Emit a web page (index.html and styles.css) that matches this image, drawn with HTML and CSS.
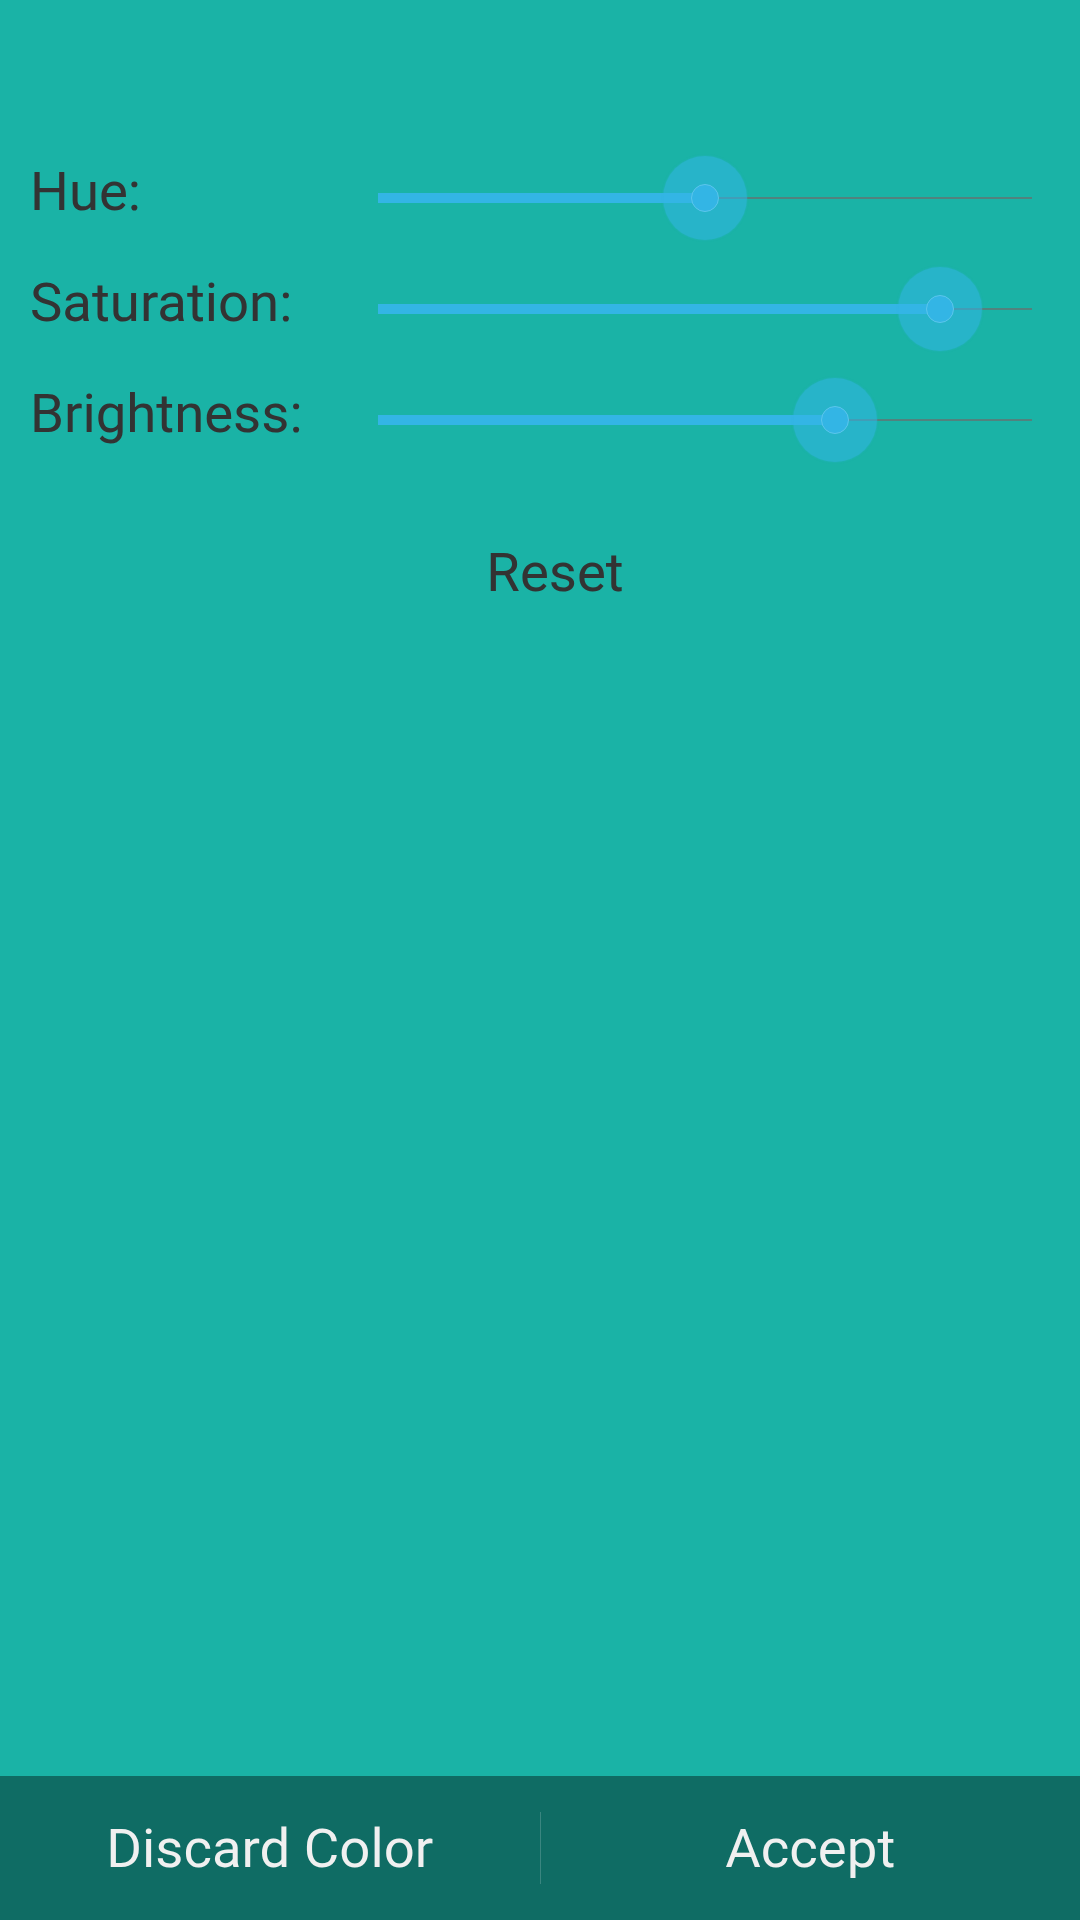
FILE: index.html
```html
<!DOCTYPE html>
<html lang="en">
<head>
<meta charset="utf-8">
<title>Color Picker</title>
<link rel="stylesheet" href="styles.css">
</head>
<body>
<div class="screen">
  <main class="content">
    <div class="rows">
      <div class="row">
        <div class="label">Hue:</div>
        <div class="slider">
          <div class="track"></div>
          <div class="fill" style="width: 50%"></div>
          <div class="thumb" style="left: 50%"><span class="knob"></span></div>
        </div>
      </div>
      <div class="row">
        <div class="label">Saturation:</div>
        <div class="slider">
          <div class="track"></div>
          <div class="fill" style="width: 85.9%"></div>
          <div class="thumb" style="left: 85.9%"><span class="knob"></span></div>
        </div>
      </div>
      <div class="row">
        <div class="label">Brightness:</div>
        <div class="slider">
          <div class="track"></div>
          <div class="fill" style="width: 69.9%"></div>
          <div class="thumb" style="left: 69.9%"><span class="knob"></span></div>
        </div>
      </div>
    </div>
    <div class="reset-wrap">
      <button class="reset">Reset</button>
    </div>
  </main>
  <footer class="bar">
    <button class="bar-btn">Discard Color</button>
    <span class="divider"></span>
    <button class="bar-btn">Accept</button>
  </footer>
</div>
</body>
</html>
```
FILE: styles.css
```css
html, body {
  margin: 0;
  padding: 0;
}

body {
  background: #1ab3a6;
  font-family: Roboto, "Noto Sans", "Liberation Sans", sans-serif;
}

.screen {
  width: 1080px;
  height: 1920px;
  display: flex;
  flex-direction: column;
}

.content {
  flex: 1;
  display: flex;
  flex-direction: column;
  padding-top: 142px;
}

.rows {
  display: flex;
  flex-direction: column;
}

.row {
  height: 111px;
  display: flex;
  align-items: flex-start;
}

.label {
  width: 378px;
  box-sizing: border-box;
  padding-left: 30px;
  padding-top: 16.5px;
  font-size: 54.5px;
  line-height: 64px;
  color: #333333;
}

.slider {
  position: relative;
  width: 654px;
  height: 111px;
}

.track {
  position: absolute;
  left: 0;
  right: 0;
  top: 54.5px;
  height: 2px;
  background: #52827e;
}

.fill {
  position: absolute;
  left: 0;
  top: 50.5px;
  height: 10px;
  background: #33b5e5;
}

.thumb {
  position: absolute;
  top: 55.5px;
  width: 84px;
  height: 84px;
  margin-left: -42px;
  margin-top: -42px;
  border-radius: 50%;
  background: rgba(51, 181, 229, 0.55);
  box-shadow: 0 0 2px rgba(51, 181, 229, 0.5);
  display: flex;
  align-items: center;
  justify-content: center;
}

.knob {
  width: 28px;
  height: 28px;
  box-sizing: border-box;
  border-radius: 50%;
  background: #33b5e5;
  border: 1.5px solid #5cc6ec;
}

.reset-wrap {
  display: flex;
  justify-content: center;
  padding-left: 30px;
  margin-top: 65px;
}

.reset {
  background: none;
  border: 0;
  padding: 0;
  font-family: inherit;
  font-size: 54.5px;
  line-height: 64px;
  color: #333333;
}

.bar {
  height: 144px;
  background: #0f6c64;
  display: flex;
  align-items: center;
}

.bar-btn {
  flex: 1;
  height: 100%;
  background: none;
  border: 0;
  padding: 0;
  font-family: inherit;
  font-size: 54.5px;
  color: #f0f0f0;
}

.divider {
  width: 1px;
  height: 72px;
  background: rgba(255, 255, 255, 0.18);
}
```
